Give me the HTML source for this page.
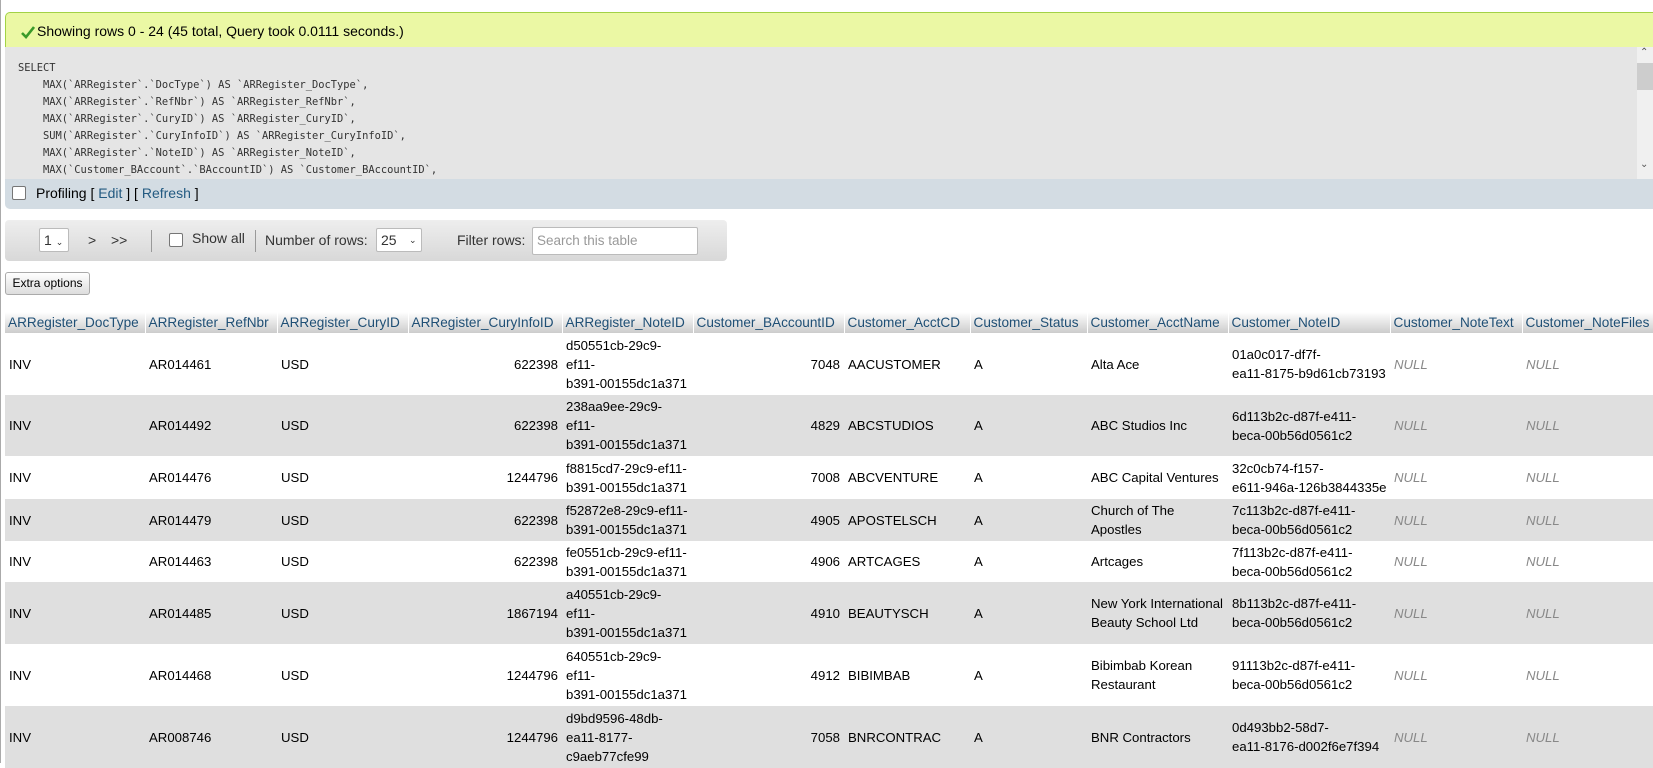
<!DOCTYPE html>
<html><head><meta charset="utf-8"><style>
*{box-sizing:border-box}
body{margin:0;width:1653px;height:763px;overflow:hidden;background:#fff;font-family:"Liberation Sans",Arial,sans-serif;font-size:13.2px;color:#000;position:relative}
.lb{position:absolute;left:0;top:0;width:1px;height:763px;background:#aaa}
.ok{position:absolute;left:5px;top:12px;width:1660px;height:36px;background:#ebf8a4;border:1px solid #a2d246;border-bottom:none;border-radius:5px 5px 0 0;font-size:14px;line-height:36px;padding-left:15px}
.ok svg{vertical-align:-3px;margin-right:2px}
.sql{position:absolute;left:5px;top:47px;width:1648px;height:132px;background:#e5e5e5;font-family:"DejaVu Sans Mono","Liberation Mono",monospace;font-size:10.4px;line-height:17px;padding:13px 0 0 13px;white-space:pre;color:#333;overflow:hidden}
.sb{position:absolute;left:1637px;top:47px;width:16px;height:132px;background:#f0f0f0}
.sb .t{position:absolute;left:0;top:16px;width:16px;height:27px;background:#cdcdcd}
.prof{position:absolute;left:5px;top:179px;width:1660px;height:30px;background:#d3dce3;border-radius:0 0 5px 5px;font-size:14px;line-height:28px;padding-left:31px}
.cb{position:absolute;width:14px;height:14px;border:1px solid #767676;border-radius:2px;background:#fff}
a{color:#235a81;text-decoration:none}
.nav{position:absolute;left:5px;top:220px;width:722px;height:41px;background:linear-gradient(#eee,#d8d8d8);border-radius:4px;font-size:14px;color:#333}
.nav span{position:absolute;top:0;line-height:41px}
.sel{position:absolute;top:8px;height:24px;background:#fff;border:1px solid #bbb;border-radius:2px;line-height:22px;padding-left:4px;font-size:14px}
.ex{position:absolute;left:5px;top:272px;width:85px;height:23px;border:1px solid #aaa;border-radius:3px;background:linear-gradient(#fff,#ddd);font-size:12px;line-height:21px;text-align:center}
table{position:absolute;left:5px;top:312px;border-collapse:collapse;table-layout:fixed;width:1790px}
th{height:21px;background:linear-gradient(#fff,#ccc);color:#1f4f75;font-weight:normal;font-size:13.6px;text-align:left;padding:0 3px;border-right:1px solid #fff;white-space:nowrap;overflow:hidden}
td{padding:0 4px;line-height:19px;vertical-align:middle;white-space:nowrap;overflow:hidden}
tr.g td{background:#dfdfdf}
td.r{text-align:right}
td.n{color:#888;font-style:italic}
</style></head><body>
<div class="lb"></div>
<div class="ok"><svg width="14" height="14" viewBox="0 0 14 14"><path d="M1 8 L5 12 L13 2" stroke="#3a9a2a" stroke-width="2.6" fill="none"/></svg>Showing rows 0 - 24 (45 total, Query took 0.0111 seconds.)</div>
<div class="sql">SELECT
    MAX(`ARRegister`.`DocType`) AS `ARRegister_DocType`,
    MAX(`ARRegister`.`RefNbr`) AS `ARRegister_RefNbr`,
    MAX(`ARRegister`.`CuryID`) AS `ARRegister_CuryID`,
    SUM(`ARRegister`.`CuryInfoID`) AS `ARRegister_CuryInfoID`,
    MAX(`ARRegister`.`NoteID`) AS `ARRegister_NoteID`,
    MAX(`Customer_BAccount`.`BAccountID`) AS `Customer_BAccountID`,</div>
<div class="sb"><div class="t"></div><span style="position:absolute;left:3px;top:0;font-size:10px;color:#555">&#8963;</span><span style="position:absolute;left:3px;top:112px;font-size:10px;color:#555">&#8964;</span></div>
<div class="prof"><div class="cb" style="left:7px;top:7px"></div>Profiling [ <a>Edit</a> ] [ <a>Refresh</a> ]</div>
<div class="nav">
<div class="sel" style="left:34px;width:30px">1 <span style="font-size:9px;position:static;line-height:22px">&#8964;</span></div>
<span style="left:83px">&gt;</span><span style="left:106px">&gt;&gt;</span>
<div style="position:absolute;left:146px;top:10px;width:1px;height:22px;background:#999"></div>
<div class="cb" style="left:164px;top:13px"></div>
<span style="left:187px;line-height:36px">Show all</span>
<div style="position:absolute;left:250px;top:10px;width:1px;height:22px;background:#999"></div>
<span style="left:260px">Number of rows:</span>
<div class="sel" style="left:371px;width:46px">25 <span style="font-size:9px;position:absolute;left:32px;line-height:22px">&#8964;</span></div>
<span style="left:452px">Filter rows:</span>
<div class="sel" style="left:527px;width:166px;top:7px;height:28px;line-height:26px;color:#999;font-size:13.5px">Search this table</div>
</div>
<div class="ex">Extra options</div>
<table>
<colgroup><col style="width:140px"><col style="width:132px"><col style="width:131px"><col style="width:154px"><col style="width:131px"><col style="width:151px"><col style="width:126px"><col style="width:117px"><col style="width:141px"><col style="width:162px"><col style="width:132px"><col style="width:140px"><col style="width:133px"></colgroup>
<tr><th>ARRegister_DocType</th><th>ARRegister_RefNbr</th><th>ARRegister_CuryID</th><th>ARRegister_CuryInfoID</th><th>ARRegister_NoteID</th><th>Customer_BAccountID</th><th>Customer_AcctCD</th><th>Customer_Status</th><th>Customer_AcctName</th><th>Customer_NoteID</th><th>Customer_NoteText</th><th>Customer_NoteFiles</th><th></th></tr>
<tr style="height:62px"><td>INV</td><td>AR014461</td><td>USD</td><td class="r">622398</td><td>d50551cb-29c9-<br>ef11-<br>b391-00155dc1a371</td><td class="r">7048</td><td>AACUSTOMER</td><td>A</td><td>Alta Ace</td><td>01a0c017-df7f-<br>ea11-8175-b9d61cb73193</td><td class="n">NULL</td><td class="n">NULL</td><td></td></tr>
<tr class="g" style="height:61px"><td>INV</td><td>AR014492</td><td>USD</td><td class="r">622398</td><td>238aa9ee-29c9-<br>ef11-<br>b391-00155dc1a371</td><td class="r">4829</td><td>ABCSTUDIOS</td><td>A</td><td>ABC Studios Inc</td><td>6d113b2c-d87f-e411-<br>beca-00b56d0561c2</td><td class="n">NULL</td><td class="n">NULL</td><td></td></tr>
<tr style="height:43px"><td>INV</td><td>AR014476</td><td>USD</td><td class="r">1244796</td><td>f8815cd7-29c9-ef11-<br>b391-00155dc1a371</td><td class="r">7008</td><td>ABCVENTURE</td><td>A</td><td>ABC Capital Ventures</td><td>32c0cb74-f157-<br>e611-946a-126b3844335e</td><td class="n">NULL</td><td class="n">NULL</td><td></td></tr>
<tr class="g" style="height:42px"><td>INV</td><td>AR014479</td><td>USD</td><td class="r">622398</td><td>f52872e8-29c9-ef11-<br>b391-00155dc1a371</td><td class="r">4905</td><td>APOSTELSCH</td><td>A</td><td>Church of The<br>Apostles</td><td>7c113b2c-d87f-e411-<br>beca-00b56d0561c2</td><td class="n">NULL</td><td class="n">NULL</td><td></td></tr>
<tr style="height:41px"><td>INV</td><td>AR014463</td><td>USD</td><td class="r">622398</td><td>fe0551cb-29c9-ef11-<br>b391-00155dc1a371</td><td class="r">4906</td><td>ARTCAGES</td><td>A</td><td>Artcages</td><td>7f113b2c-d87f-e411-<br>beca-00b56d0561c2</td><td class="n">NULL</td><td class="n">NULL</td><td></td></tr>
<tr class="g" style="height:62px"><td>INV</td><td>AR014485</td><td>USD</td><td class="r">1867194</td><td>a40551cb-29c9-<br>ef11-<br>b391-00155dc1a371</td><td class="r">4910</td><td>BEAUTYSCH</td><td>A</td><td>New York International<br>Beauty School Ltd</td><td>8b113b2c-d87f-e411-<br>beca-00b56d0561c2</td><td class="n">NULL</td><td class="n">NULL</td><td></td></tr>
<tr style="height:62px"><td>INV</td><td>AR014468</td><td>USD</td><td class="r">1244796</td><td>640551cb-29c9-<br>ef11-<br>b391-00155dc1a371</td><td class="r">4912</td><td>BIBIMBAB</td><td>A</td><td>Bibimbab Korean<br>Restaurant</td><td>91113b2c-d87f-e411-<br>beca-00b56d0561c2</td><td class="n">NULL</td><td class="n">NULL</td><td></td></tr>
<tr class="g" style="height:62px"><td>INV</td><td>AR008746</td><td>USD</td><td class="r">1244796</td><td>d9bd9596-48db-<br>ea11-8177-<br>c9aeb77cfe99</td><td class="r">7058</td><td>BNRCONTRAC</td><td>A</td><td>BNR Contractors</td><td>0d493bb2-58d7-<br>ea11-8176-d002f6e7f394</td><td class="n">NULL</td><td class="n">NULL</td><td></td></tr>
</table>
</body></html>
